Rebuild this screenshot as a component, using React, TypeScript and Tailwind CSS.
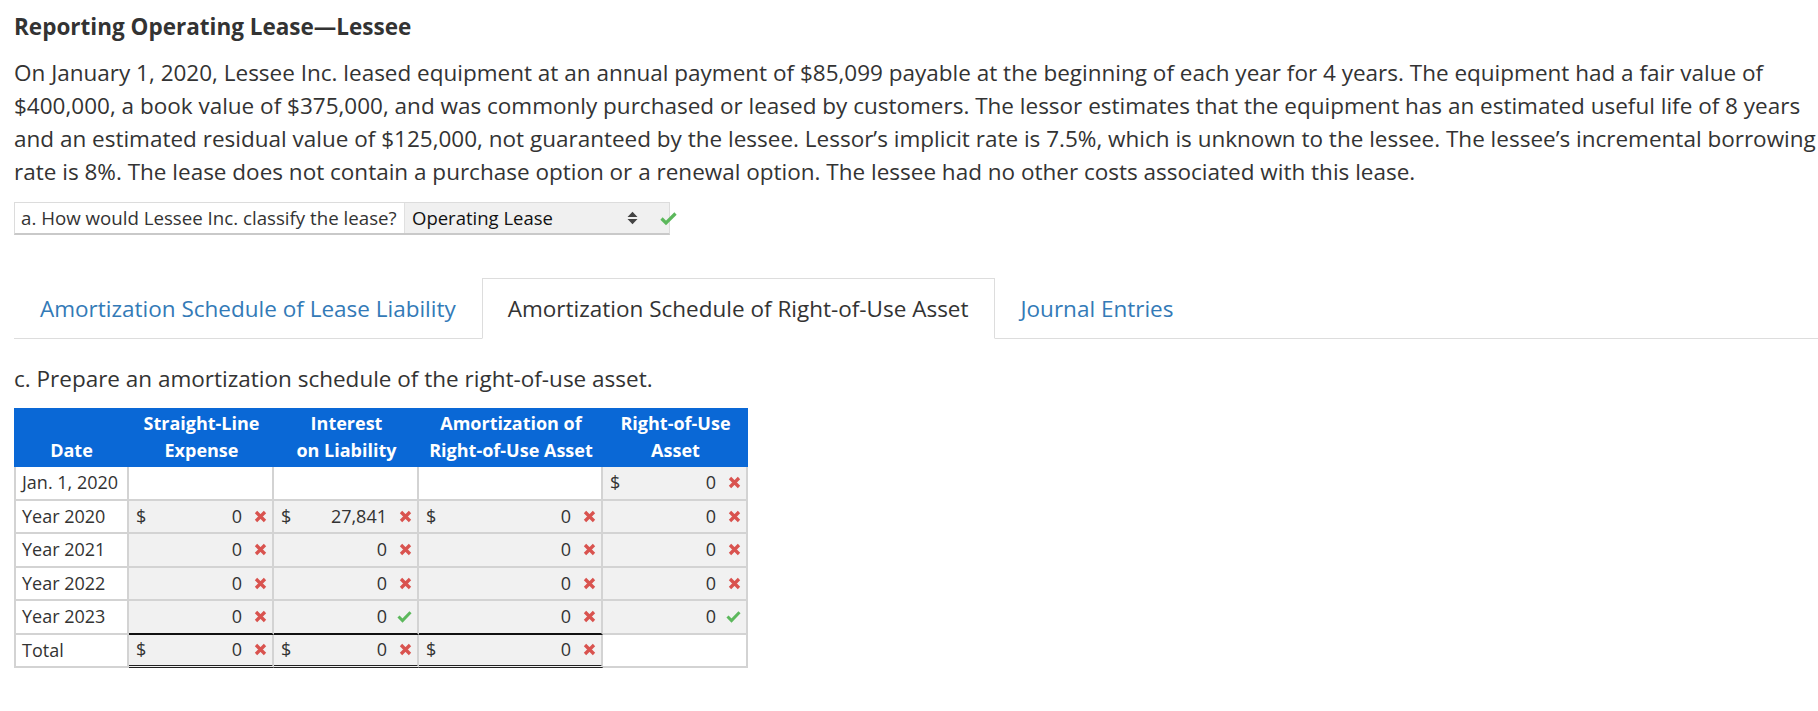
import React from 'react';

const XMark = () => (
  <svg width="13" height="13" viewBox="0 0 13 13">
    <path d="M2 2 L11 11 M11 2 L2 11" stroke="#d9534f" strokeWidth="3.3" />
  </svg>
);

const Check = () => (
  <svg width="15" height="13" viewBox="0 0 15 13">
    <path d="M1.5 6.5 L5.5 10.5 L13.5 2.2" stroke="#5cb85c" strokeWidth="3" fill="none" />
  </svg>
);

const SortIcon = () => (
  <svg width="11" height="14" viewBox="0 0 11 14">
    <path d="M0.5 6 L5.5 0.8 L10.5 6 Z M0.5 8 L5.5 13.2 L10.5 8 Z" fill="#444" />
  </svg>
);

type Cell = { dollar?: boolean; v?: string; ok?: boolean; white?: boolean; blank?: boolean };

const rows: { date: string; cells: Cell[]; total?: boolean }[] = [
  {
    date: 'Jan. 1, 2020',
    cells: [{ blank: true, white: true }, { blank: true, white: true }, { blank: true, white: true }, { dollar: true, v: '0' }],
  },
  {
    date: 'Year 2020',
    cells: [{ dollar: true, v: '0' }, { dollar: true, v: '27,841' }, { dollar: true, v: '0' }, { v: '0' }],
  },
  { date: 'Year 2021', cells: [{ v: '0' }, { v: '0' }, { v: '0' }, { v: '0' }] },
  { date: 'Year 2022', cells: [{ v: '0' }, { v: '0' }, { v: '0' }, { v: '0' }] },
  { date: 'Year 2023', cells: [{ v: '0' }, { v: '0', ok: true }, { v: '0' }, { v: '0', ok: true }] },
  {
    date: 'Total',
    total: true,
    cells: [{ dollar: true, v: '0' }, { dollar: true, v: '0' }, { dollar: true, v: '0' }, { blank: true, white: true }],
  },
];

export default function App() {
  return (
    <div className="min-h-screen overflow-hidden bg-white pl-[14px] pt-[13px] text-[#333] font-['Open_Sans',sans-serif]">
      <h1 className="text-[22.5px] font-bold leading-[28px]">Reporting Operating Lease—Lessee</h1>

      <p className="mt-[15px] whitespace-nowrap text-[22.5px] leading-[33px]">
        On January 1, 2020, Lessee Inc. leased equipment at an annual payment of $85,099 payable at the beginning of each year for 4 years. The equipment had a fair value of
        <br />
        $400,000, a book value of $375,000, and was commonly purchased or leased by customers. The lessor estimates that the equipment has an estimated useful life of 8 years
        <br />
        and an estimated residual value of $125,000, not guaranteed by the lessee. Lessor’s implicit rate is 7.5%, which is unknown to the lessee. The lessee’s incremental borrowing
        <br />
        rate is 8%. The lease does not contain a purchase option or a renewal option. The lessee had no other costs associated with this lease.
      </p>

      {/* classification question */}
      <div className="mt-[14px] flex h-[33px] w-[656px] border border-[#dcdcdc] border-b-2 border-b-[#c9c9c9]">
        <div className="flex w-[390px] items-center border-r border-[#e0e0e0] bg-white pl-[6px] text-[18.7px] whitespace-nowrap">
          a. How would Lessee Inc. classify the lease?
        </div>
        <div className="flex flex-1 items-center bg-[#f0f0f0] pl-[7px] text-[18.5px] text-[#111]">
          <span>Operating Lease</span>
          <span className="ml-auto flex">
            <SortIcon />
          </span>
          <span className="-mr-[8px] ml-[22px] flex">
            <svg width="17" height="15" viewBox="0 0 17 15">
              <path d="M1.5 7.5 L6 12 L15.5 2.5" stroke="#5cb85c" strokeWidth="3.2" fill="none" />
            </svg>
          </span>
        </div>
      </div>

      {/* tabs */}
      <div className="mt-[43px] flex border-b border-[#ddd] text-[22.5px] whitespace-nowrap">
        <div className="-mb-px flex h-[61px] items-center border border-transparent px-[25px] text-[#337ab7]">
          Amortization Schedule of Lease Liability
        </div>
        <div className="-mb-px flex h-[61px] items-center border border-[#ddd] border-b-white bg-white px-[25px] text-[#333]">
          Amortization Schedule of Right-of-Use Asset
        </div>
        <div className="-mb-px flex h-[61px] items-center border border-transparent px-[25px] text-[#337ab7]">
          Journal Entries
        </div>
      </div>

      <p className="mt-[23px] text-[22.5px] leading-[33px]">c. Prepare an amortization schedule of the right-of-use asset.</p>

      <table className="mt-[13px] w-[734px] table-fixed border-separate border-spacing-0 text-[18px]">
        <thead>
          <tr className="h-[59px] bg-[#0a68d6] text-white font-bold leading-[27px]">
            <th className="w-[115px] pb-[3px] align-bottom">Date</th>
            <th className="w-[145px] pb-[3px] align-bottom">Straight-Line<br />Expense</th>
            <th className="w-[145px] pb-[3px] align-bottom">Interest<br />on Liability</th>
            <th className="w-[184px] pb-[3px] align-bottom">Amortization of<br />Right-of-Use Asset</th>
            <th className="w-[145px] pb-[3px] align-bottom">Right-of-Use<br />Asset</th>
          </tr>
        </thead>
        <tbody>
          {rows.map((row, ri) => (
            <tr key={row.date} className="h-[33.5px]">
              <td className="border-b-2 border-l-2 border-r-2 border-[#d3d3d3] bg-white pl-[6px] whitespace-nowrap">
                {row.date}
              </td>
              {row.cells.map((c, ci) => {
                const underlined = ci < 3;
                let bottom = 'border-b-[#d3d3d3]';
                if (ri === 4 && underlined) bottom = 'border-b-[#111]';
                if (row.total && underlined) bottom = 'border-b-[3px] border-b-[#222] [border-bottom-style:double]';
                return (
                  <td
                    key={ci}
                    className={`border-b-2 border-r-2 border-r-[#d3d3d3] ${bottom} pl-[7px] pr-[5px] ${c.white ? 'bg-white' : 'bg-[#f1f1f1]'}`}
                  >
                    {!c.blank && (
                      <div className="flex items-center">
                        <span className="w-[12px]">{c.dollar ? '$' : ''}</span>
                        <span className="flex-1 text-right">{c.v}</span>
                        <span className="ml-[10px] flex w-[15px] justify-end">{c.ok ? <Check /> : <XMark />}</span>
                      </div>
                    )}
                  </td>
                );
              })}
            </tr>
          ))}
        </tbody>
      </table>
    </div>
  );
}
